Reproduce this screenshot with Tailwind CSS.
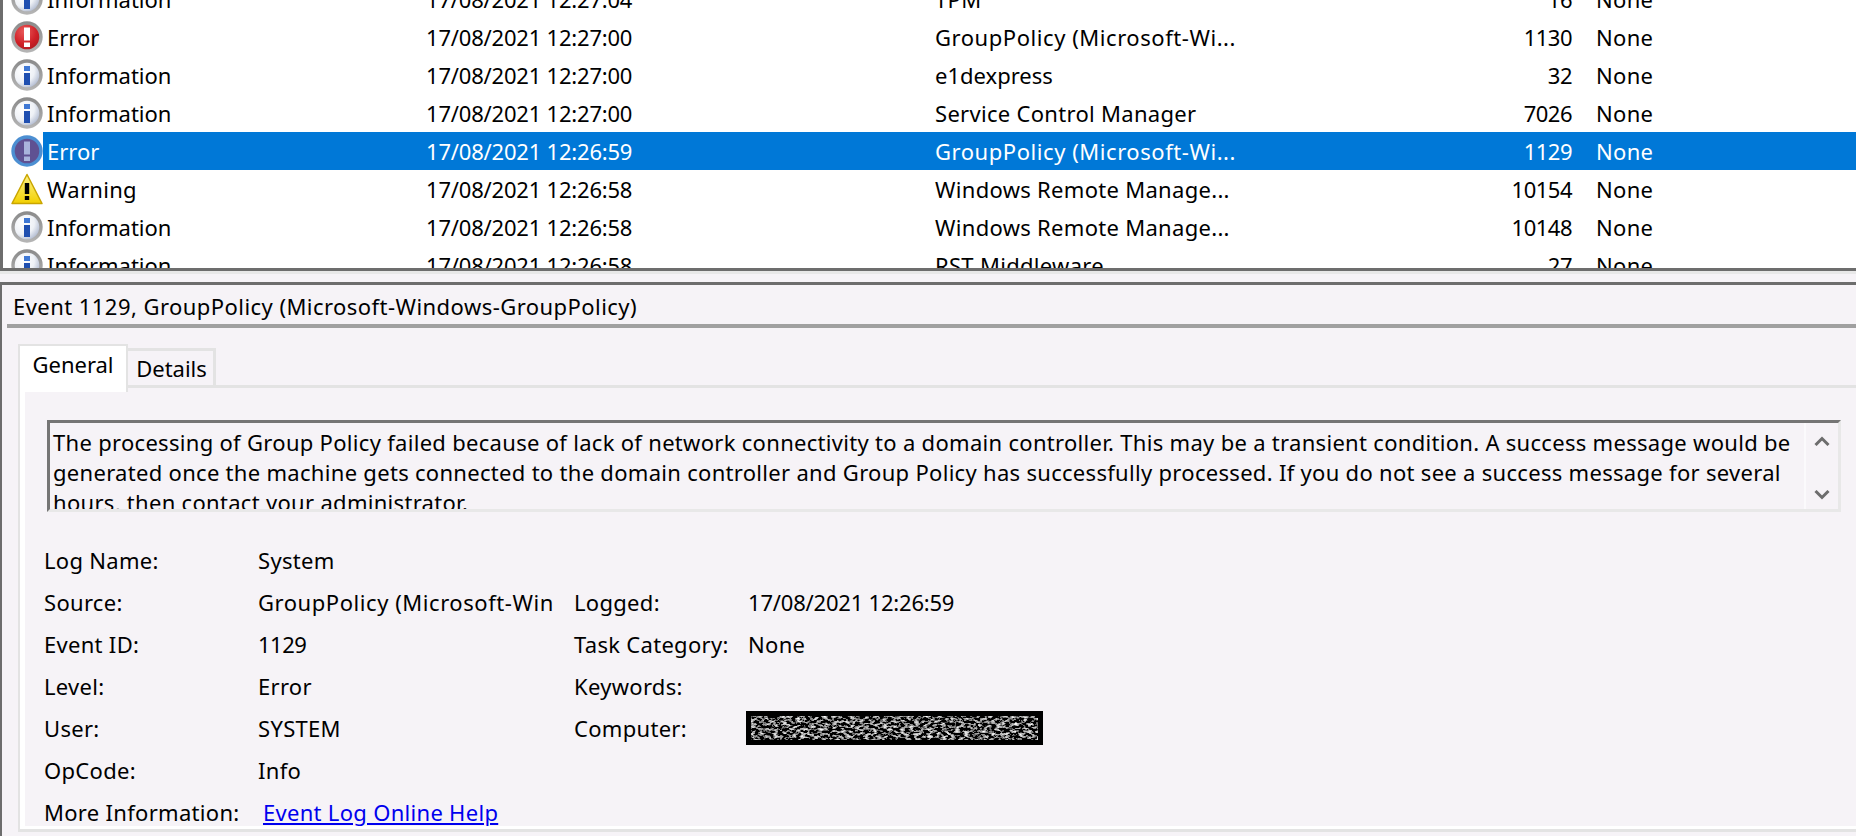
<!DOCTYPE html>
<html lang="en">
<head>
<meta charset="UTF-8">
<title>Event Viewer</title>
<script src="https://cdn.jsdelivr.net/npm/@tailwindcss/browser@4"></script>
</head>
<body class="bg-[#f6f3f7] font-['Noto_Sans',sans-serif] text-[22px] tracking-[0.3px] text-black overflow-hidden">
<svg class="absolute h-0 w-0">
  <defs>
    <radialGradient id="silver" cx="35%" cy="35%" r="75%"><stop offset="0" stop-color="#ffffff"/><stop offset="0.55" stop-color="#eef1f6"/><stop offset="1" stop-color="#9fabc6"/></radialGradient>
    <radialGradient id="red" cx="40%" cy="30%" r="75%"><stop offset="0" stop-color="#ea5a5a"/><stop offset="0.6" stop-color="#cf2027"/><stop offset="1" stop-color="#a81a20"/></radialGradient>
    <linearGradient id="yellow" x1="0" y1="0" x2="0" y2="1"><stop offset="0" stop-color="#fff38a"/><stop offset="1" stop-color="#f2d000"/></linearGradient>
    <linearGradient id="ring" x1="0" y1="0" x2="0" y2="1"><stop offset="0" stop-color="#8c8c8c"/><stop offset="1" stop-color="#b4b4b4"/></linearGradient>
  </defs>
  <symbol id="i-info" viewBox="0 0 32 32">
    <circle cx="16" cy="16" r="14" fill="url(#silver)" stroke="url(#ring)" stroke-width="3.4"/>
    <rect x="13" y="14" width="6" height="12" fill="#1f4fb0"/>
    <rect x="13" y="7" width="6" height="5" fill="#3f78d4"/>
  </symbol>
  <symbol id="i-error" viewBox="0 0 32 32">
    <circle cx="16" cy="16" r="14" fill="url(#red)" stroke="url(#ring)" stroke-width="3.4"/>
    <rect x="13" y="6.5" width="6" height="13" fill="#ffffff"/>
    <rect x="13" y="21.5" width="6" height="4.5" fill="#ffffff"/>
  </symbol>
  <symbol id="i-error-sel" viewBox="0 0 32 32">
    <circle cx="16" cy="16" r="14" fill="#5f5192" stroke="#4c8fd2" stroke-width="3.4"/>
    <rect x="13" y="6.5" width="6" height="13" fill="#a9b4dc"/>
    <rect x="13" y="21.5" width="6" height="4.5" fill="#a9b4dc"/>
  </symbol>
  <symbol id="i-warn" viewBox="0 0 32 32">
    <path d="M16 1.5 L31 30.5 H1 Z" fill="url(#yellow)" stroke="#c9a500" stroke-width="1.5" stroke-linejoin="round"/>
    <rect x="13.8" y="10" width="4.4" height="11" fill="#000000"/>
    <rect x="13.8" y="23" width="4.4" height="4" fill="#000000"/>
  </symbol>
  <filter id="noise" x="0" y="0" width="100%" height="100%">
    <feTurbulence type="fractalNoise" baseFrequency="0.22 0.4" numOctaves="3" seed="7"/>
    <feColorMatrix values="2.6 0 0 0 -1.2 2.6 0 0 0 -1.2 2.6 0 0 0 -1.2 0 0 0 0 1"/>
  </filter>
</svg>

<!-- event list -->
<section class="h-[271px] overflow-hidden border-l-[3px] border-b-[3px] border-[#6d6d6d] bg-white">
  <div class="-mt-[20px]">
    <div class="flex h-[38px] items-center pl-[8px]">
      <svg class="size-[32px] shrink-0"><use href="#i-info"/></svg>
      <div class="grid h-full flex-1 grid-cols-[379px_509px_637px_1fr] items-center pl-[4px] pt-[1px]"><span class="tracking-normal">Information</span><span class="tracking-[-0.2px]">17/08/2021 12:27:04</span><span>TPM</span><span class="pl-[24px] relative"><span class="absolute right-full tracking-[-0.5px]">16</span>None</span></div>
    </div>
    <div class="flex h-[38px] items-center pl-[8px]">
      <svg class="size-[32px] shrink-0"><use href="#i-error"/></svg>
      <div class="grid h-full flex-1 grid-cols-[379px_509px_637px_1fr] items-center pl-[4px] pt-[1px]"><span class="tracking-normal">Error</span><span class="tracking-[-0.2px]">17/08/2021 12:27:00</span><span class="tracking-[0.55px]">GroupPolicy (Microsoft-Wi...</span><span class="pl-[24px] relative"><span class="absolute right-full tracking-[-0.5px]">1130</span>None</span></div>
    </div>
    <div class="flex h-[38px] items-center pl-[8px]">
      <svg class="size-[32px] shrink-0"><use href="#i-info"/></svg>
      <div class="grid h-full flex-1 grid-cols-[379px_509px_637px_1fr] items-center pl-[4px] pt-[1px]"><span class="tracking-normal">Information</span><span class="tracking-[-0.2px]">17/08/2021 12:27:00</span><span class="tracking-normal">e1dexpress</span><span class="pl-[24px] relative"><span class="absolute right-full tracking-[-0.5px]">32</span>None</span></div>
    </div>
    <div class="flex h-[38px] items-center pl-[8px]">
      <svg class="size-[32px] shrink-0"><use href="#i-info"/></svg>
      <div class="grid h-full flex-1 grid-cols-[379px_509px_637px_1fr] items-center pl-[4px] pt-[1px]"><span class="tracking-normal">Information</span><span class="tracking-[-0.2px]">17/08/2021 12:27:00</span><span>Service Control Manager</span><span class="pl-[24px] relative"><span class="absolute right-full tracking-[-0.5px]">7026</span>None</span></div>
    </div>
    <div class="flex h-[38px] items-center pl-[8px]">
      <svg class="size-[32px] shrink-0"><use href="#i-error-sel"/></svg>
      <div class="grid h-full flex-1 grid-cols-[379px_509px_637px_1fr] items-center bg-[#0078d7] pl-[4px] pt-[1px] text-white"><span class="tracking-normal">Error</span><span class="tracking-[-0.2px]">17/08/2021 12:26:59</span><span class="tracking-[0.55px]">GroupPolicy (Microsoft-Wi...</span><span class="pl-[24px] relative"><span class="absolute right-full tracking-[-0.5px]">1129</span>None</span></div>
    </div>
    <div class="flex h-[38px] items-center pl-[8px]">
      <svg class="size-[32px] shrink-0"><use href="#i-warn"/></svg>
      <div class="grid h-full flex-1 grid-cols-[379px_509px_637px_1fr] items-center pl-[4px] pt-[1px]"><span>Warning</span><span class="tracking-[-0.2px]">17/08/2021 12:26:58</span><span>Windows Remote Manage...</span><span class="pl-[24px] relative"><span class="absolute right-full tracking-[-0.5px]">10154</span>None</span></div>
    </div>
    <div class="flex h-[38px] items-center pl-[8px]">
      <svg class="size-[32px] shrink-0"><use href="#i-info"/></svg>
      <div class="grid h-full flex-1 grid-cols-[379px_509px_637px_1fr] items-center pl-[4px] pt-[1px]"><span class="tracking-normal">Information</span><span class="tracking-[-0.2px]">17/08/2021 12:26:58</span><span>Windows Remote Manage...</span><span class="pl-[24px] relative"><span class="absolute right-full tracking-[-0.5px]">10148</span>None</span></div>
    </div>
    <div class="flex h-[38px] items-center pl-[8px]">
      <svg class="size-[32px] shrink-0"><use href="#i-info"/></svg>
      <div class="grid h-full flex-1 grid-cols-[379px_509px_637px_1fr] items-center pl-[4px] pt-[1px]"><span class="tracking-normal">Information</span><span class="tracking-[-0.2px]">17/08/2021 12:26:58</span><span>RST Middleware</span><span class="pl-[24px] relative"><span class="absolute right-full tracking-[-0.5px]">27</span>None</span></div>
    </div>
  </div>
</section>

<!-- splitter -->
<div class="h-[11px] border-t-[3px] border-[#e8e8e8]"></div>

<!-- detail pane -->
<section class="h-[554px] overflow-hidden border-l-2 border-t-[3px] border-[#6d6d6d] pl-[5px]">
  <div class="flex h-[43px] items-center border-b-[4px] border-[#a0a0a0] pl-[6px] pt-[3px] tracking-[0.45px]">Event 1129, GroupPolicy (Microsoft-Windows-GroupPolicy)</div>

  <div class="ml-[11px] mt-[12px] flex h-[48px] items-end">
    <div class="relative z-10 -mb-[4px] flex h-[48px] w-[110px] items-start justify-center border-x-[2px] border-t-[2px] border-[#e3e3e3] bg-white pt-[2px] tracking-normal">General</div>
    <div class="flex h-[40px] w-[88px] items-center justify-center border-y-[3px] border-r-[3px] border-[#e3e3e3] pt-[1px] pl-[2px] tracking-normal">Details</div>
    <div class="h-[3px] flex-1 bg-[#e3e3e3]"></div>
  </div>

  <div class="ml-[11px] h-[444px] border-b-[3px] border-l-[2px] border-[#e3e3e3] bg-white pb-[3px] pl-[5px] pt-0">
    <div class="h-full bg-[#f6f3f7] pl-[22px] pr-[15px] pt-[32px]">
      <!-- description box -->
      <div class="flex h-[92px] overflow-hidden border-l-[3px] border-t-[3px] border-[#757575] border-r-[3px] border-r-[#e8e8e8] border-b-[3px] border-b-[#e8e8e8]">
        <p class="flex-1 whitespace-nowrap pl-[3px] pt-[4px] leading-[30px]">The processing of Group Policy failed because of lack of network connectivity to a domain controller. This may be a transient condition. A success message would be<br>generated once the machine gets connected to the domain controller and Group Policy has successfully processed. If you do not see a success message for several<br>hours, then contact your administrator.</p>
        <div class="flex w-[34px] flex-col items-center justify-between border-l-[2px] border-[#fbfafc] pb-[9px] pt-[13px]">
          <svg class="h-[10px] w-[16px]" viewBox="0 0 16 10"><path d="M1.5 9 L8 2.5 L14.5 9" fill="none" stroke="#6d6d6d" stroke-width="3"/></svg>
          <svg class="h-[10px] w-[16px]" viewBox="0 0 16 10"><path d="M1.5 1 L8 7.5 L14.5 1" fill="none" stroke="#6d6d6d" stroke-width="3"/></svg>
        </div>
      </div>

      <!-- properties -->
      <div class="mt-[27px] grid grid-cols-[214px_316px_174px_1fr] grid-rows-[repeat(7,42px)] items-center -ml-[3px]">
        <span>Log Name:</span><span>System</span><span></span><span></span>
        <span>Source:</span><span class="overflow-hidden whitespace-nowrap tracking-[0.55px]">GroupPolicy (Microsoft-Win</span><span>Logged:</span><span class="tracking-[-0.2px]">17/08/2021 12:26:59</span>
        <span>Event ID:</span><span class="tracking-[-0.5px]">1129</span><span>Task Category:</span><span>None</span>
        <span>Level:</span><span>Error</span><span>Keywords:</span><span></span>
        <span>User:</span><span>SYSTEM</span><span>Computer:</span>
        <span class="-ml-[2px] flex h-[34px] w-[297px] items-center justify-center bg-black"><svg class="h-[24px] w-[287px]" aria-hidden="true"><rect width="287" height="24" filter="url(#noise)"/></svg></span>
        <span>OpCode:</span><span>Info</span><span></span><span></span>
        <span>More Information:</span><a href="#" class="pl-[5px] text-[#0000ee] underline col-span-3">Event Log Online Help</a>
      </div>
    </div>
  </div>
</section>
</body>
</html>
